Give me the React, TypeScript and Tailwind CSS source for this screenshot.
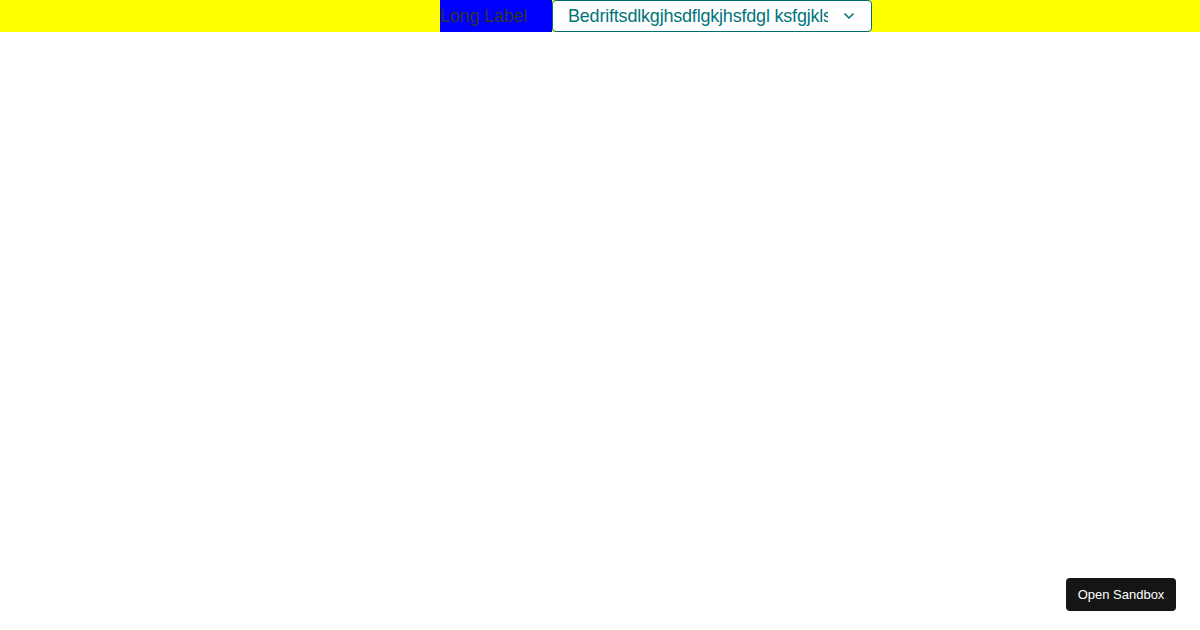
import { ChevronDown } from "lucide-react";

export default function App() {
  return (
    <div className="relative h-[630px] w-full bg-white font-['Liberation_Sans',Arial,sans-serif]">
      <div className="flex h-8 w-full justify-center bg-[#ffff00]">
        <div className="flex w-80">
          <div className="flex h-8 w-28 shrink-0 items-center bg-[#0000ff] text-[18px] tracking-[-0.2px] text-[#333333]">
            Long Label
          </div>
          <div className="flex h-8 w-80 shrink-0 items-center rounded-[4px] border border-[#006d72] bg-white pl-[15px] text-[18px] tracking-[-0.2px] text-[#00747a]">
            <span className="w-[260px] shrink-0 overflow-hidden whitespace-nowrap">
              Bedriftsdlkgjhsdflgkjhsfdgl ksfgjklsdfg
            </span>
            <ChevronDown className="ml-[13px] h-4 w-4 shrink-0" strokeWidth={2.5} />
          </div>
        </div>
      </div>
      <button className="absolute bottom-[19px] right-[24px] h-[33px] w-[110px] rounded-[4px] bg-[#151515] text-[13px] text-white">
        Open Sandbox
      </button>
    </div>
  );
}
